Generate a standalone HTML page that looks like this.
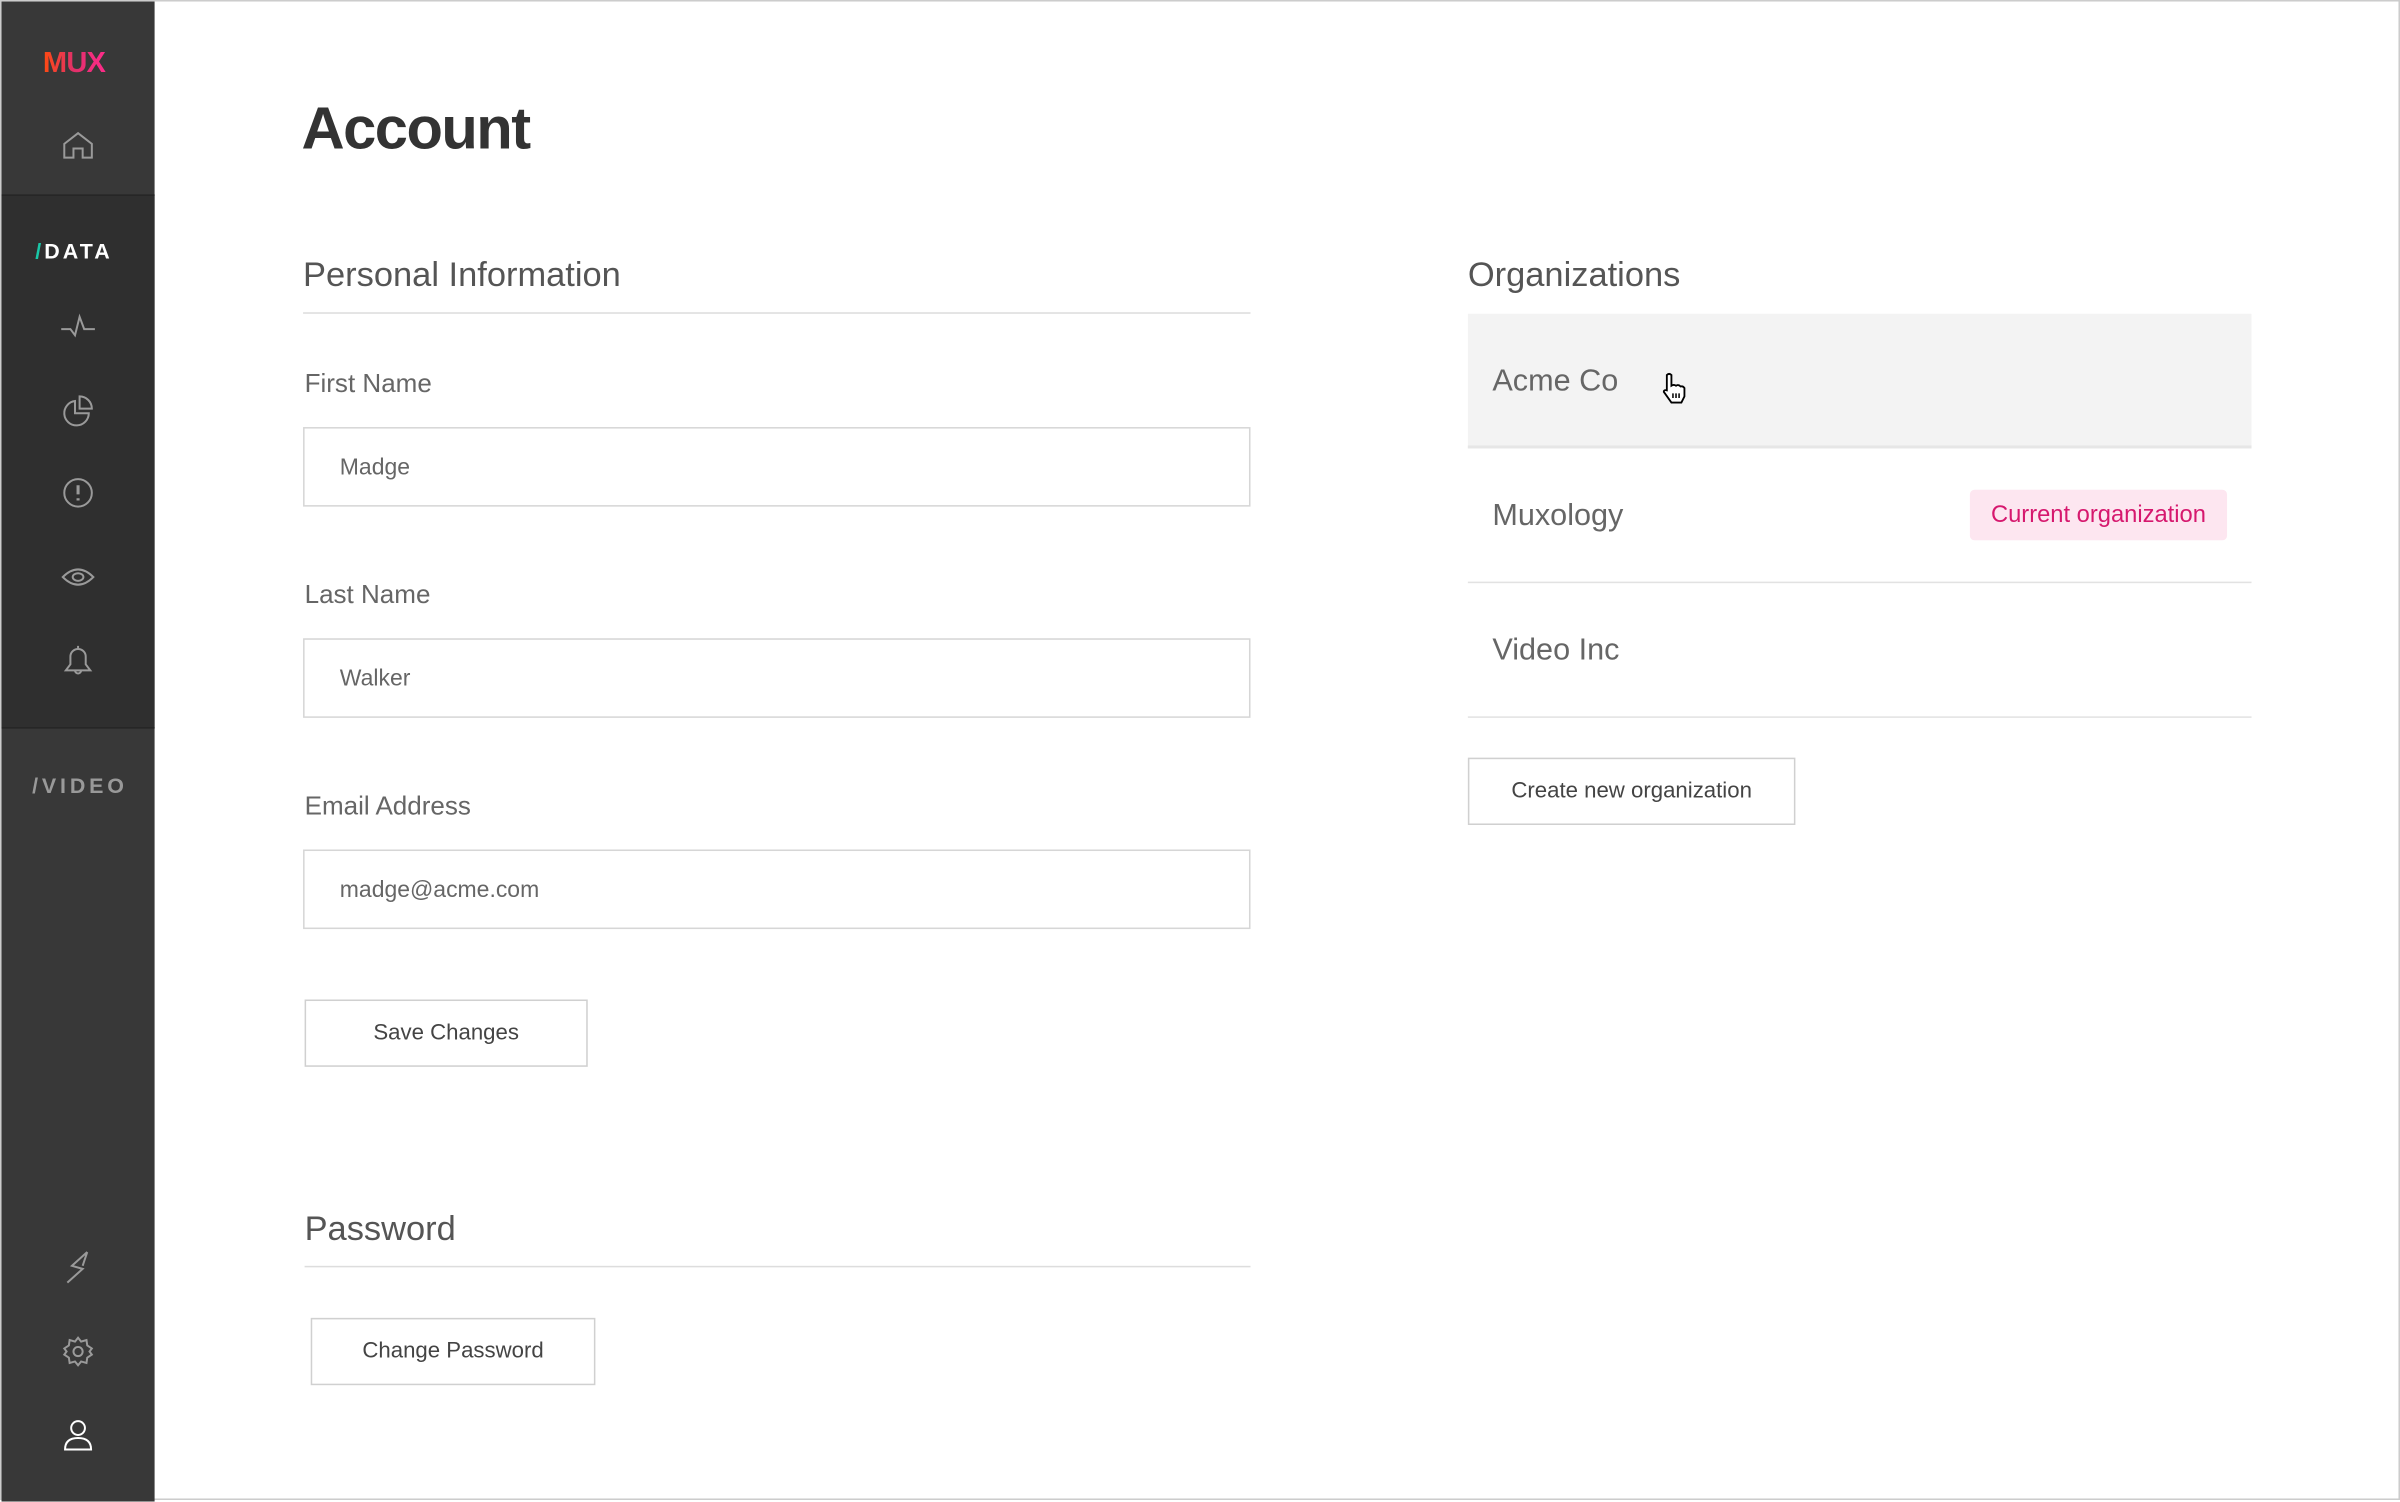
<!DOCTYPE html>
<html><head><meta charset="utf-8"><style>
html,body{margin:0;padding:0;width:2400px;height:1500px;overflow:hidden;background:#fff}
#s{position:absolute;left:0;top:0;width:1568px;height:980px;transform:scale(1.530612);transform-origin:0 0;font-family:"Liberation Sans",sans-serif;color:#555;border:1px solid #ccc;box-sizing:border-box;background:#fff}
.a{position:absolute}
.side{left:0;top:0;width:100px;height:980px;background:#383838}
.mid{left:0;top:126px;width:100px;height:347px;background:#2f2f2f;border-top:1px solid #262626;border-bottom:1px solid #262626}
.ic{position:absolute;left:38px;width:24px;height:24px;fill:none;stroke:#9a9a9a;stroke-width:1.3}
h1{position:absolute;left:196px;top:62px;margin:0;font-size:39px;font-weight:bold;color:#333;letter-spacing:-1px}
.h2{font-size:22.5px;color:#555}
.line{height:1px;background:#ddd}
.lbl{font-size:17px;color:#666}
.inp{position:absolute;left:197px;width:619px;height:52px;border:1px solid #d6d6d6;font-size:15px;color:#666;line-height:52px;padding-left:23px;box-sizing:border-box}
.btn{position:absolute;border:1px solid #d0d0d0;font-size:14.5px;color:#444;text-align:center;box-sizing:border-box}
.org{position:absolute;left:958px;width:512px;height:88px;border-bottom:1px solid #e2e2e2;box-sizing:border-box;font-size:20px;color:#666;line-height:88px;padding-left:16px}
</style></head><body><div id="s">
<div class="a side"></div><div class="a mid"></div>
<div class="a" style="left:27px;top:30px;font-size:19px;font-weight:bold;letter-spacing:-0.5px;background:linear-gradient(90deg,#ff4a10,#e0306a,#ff2b8a);-webkit-background-clip:text;color:transparent">MUX</div>
<svg class="ic" style="top:82px" viewBox="0 0 24 24"><path d="M3 11 L12 4 L21 11 V20 H15 V14 H9 V20 H3 Z"/></svg>
<div class="a" style="left:22px;top:155px;font-size:14px;font-weight:bold;letter-spacing:2px;color:#fff"><span style="color:#19c7a7">/</span>DATA</div>
<svg class="ic" style="top:201px" viewBox="0 0 24 24"><path d="M1 13 H7 L10 17 L13 5 L16 13 H23"/></svg>
<svg class="ic" style="top:255px" viewBox="0 0 24 24"><path d="M10 6 A8 8 0 1 0 19 14 H10 Z M13 3 V11 H21 A8 8 0 0 0 13 3 Z"/></svg>
<svg class="ic" style="top:309px" viewBox="0 0 24 24"><circle cx="12" cy="12" r="9"/><path d="M12 7 V13 M12 15.5 V17" stroke-width="2"/></svg>
<svg class="ic" style="top:364px" viewBox="0 0 24 24"><path d="M2 12 Q12 2 22 12 Q12 22 2 12 Z"/><ellipse cx="12" cy="12" rx="3.5" ry="2.5"/></svg>
<svg class="ic" style="top:418px" viewBox="0 0 24 24"><path d="M4 19 H20 L17 15 V10 A5 5 0 0 0 7 10 V15 Z M12 5 V3 M10 19 A2 2 0 0 0 14 19"/></svg>
<div class="a" style="left:20px;top:504px;font-size:14px;font-weight:bold;letter-spacing:2.5px;color:#999">/VIDEO</div>
<svg class="ic" style="top:815px" viewBox="0 0 24 24"><path d="M18 2 L8 11 L15 13 L5 22 M18 2 L15 11 M8 11 L15 13"/></svg>
<svg class="ic" style="top:870px" viewBox="0 0 24 24"><circle cx="12" cy="12" r="3"/><path d="M12 3 L14 5.5 L17.5 4.5 L18 8 L21 10 L19.5 12 L21 14 L18 16 L17.5 19.5 L14 18.5 L12 21 L10 18.5 L6.5 19.5 L6 16 L3 14 L4.5 12 L3 10 L6 8 L6.5 4.5 L10 5.5 Z"/></svg>
<svg class="ic" style="top:924px;stroke:#fff" viewBox="0 0 24 24"><circle cx="12" cy="8" r="4.5"/><path d="M3.5 22 Q3.5 14.5 12 14.5 Q20.5 14.5 20.5 22 Z"/></svg>

<h1>Account</h1>
<div class="a h2" style="left:197px;top:166px">Personal Information</div>
<div class="a line" style="left:197px;top:203px;width:619px"></div>
<div class="a lbl" style="left:198px;top:240px">First Name</div>
<div class="inp" style="top:278px">Madge</div>
<div class="a lbl" style="left:198px;top:378px">Last Name</div>
<div class="inp" style="top:416px">Walker</div>
<div class="a lbl" style="left:198px;top:516px">Email Address</div>
<div class="inp" style="top:554px">madge@acme.com</div>
<div class="btn" style="left:198px;top:652px;width:185px;height:44px;line-height:42px">Save Changes</div>
<div class="a h2" style="left:198px;top:789px">Password</div>
<div class="a line" style="left:198px;top:826px;width:618px"></div>
<div class="btn" style="left:202px;top:860px;width:186px;height:44px;line-height:42px">Change Password</div>

<div class="a h2" style="left:958px;top:166px">Organizations</div>
<div class="org" style="top:204px;background:#f3f3f3;border-bottom:2px solid #e6e6e6">Acme Co</div>
<svg class="a" style="left:1083px;top:242px" width="20" height="22" viewBox="0 0 20 22"><path d="M5 2 Q6.5 0.5 8 2 V9 Q9.5 8 11 9 Q12.5 8 14 9.5 Q15.5 9 16.5 10.5 V16 L14.5 20 H8 L3 13 Q3 11.5 5 12 Z" fill="#fff" stroke="#000" stroke-width="1.2"/><path d="M9 14 V17 M11 14 V17 M13 14 V17" stroke="#000"/></svg>
<div class="org" style="top:292px">Muxology</div>
<div class="a" style="left:1286px;top:319px;width:168px;height:33px;background:#fde6f0;border-radius:3px;color:#d6186e;font-size:15.5px;line-height:33px;text-align:center">Current organization</div>
<div class="org" style="top:380px">Video Inc</div>
<div class="btn" style="left:958px;top:494px;width:214px;height:44px;line-height:42px">Create new organization</div>
</div></body></html>
